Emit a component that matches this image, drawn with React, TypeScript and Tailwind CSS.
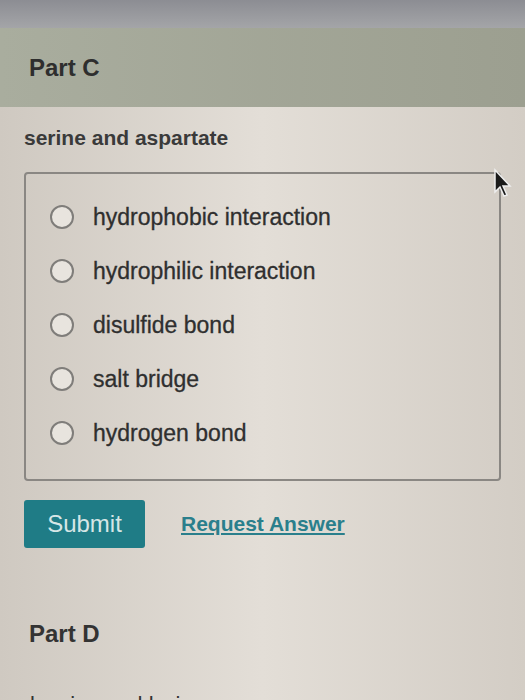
const options = [
  'hydrophobic interaction',
  'hydrophilic interaction',
  'disulfide bond',
  'salt bridge',
  'hydrogen bond',
]

export default function App() {
  return (
    <div className="relative w-[525px] h-[700px] overflow-hidden bg-gradient-to-r from-[#cfc9c1] via-[#e3ded7] to-[#d3cdc5] font-['Liberation_Sans',Arial,sans-serif] text-[#333]">
      <div className="h-[28px] bg-gradient-to-b from-[#8c8d93] to-[#a4a5a8]"></div>
      <div className="h-[79px] bg-gradient-to-r from-[#a9ad9e] to-[#9c9f90] flex items-center pl-[29px]">
        <span className="text-[24px] font-bold text-[#2e2e2e]">Part C</span>
      </div>
      <div className="px-[24px] pt-[19px]">
        <p className="text-[21px] font-bold text-[#3a3a3a] leading-[24px]">serine and aspartate</p>
        <div className="mt-[22px] w-[477px] h-[309px] border-2 border-[#8a8783] rounded-[4px] pt-[31px] pl-[24px]">
          <div className="flex flex-col gap-[30px]">
            {options.map((o) => (
              <label key={o} className="flex items-center gap-[19px] h-[24px]">
                <span className="w-[24px] h-[24px] rounded-full border-2 border-[#7f7d7a] bg-[#e8e4de]"></span>
                <span className="text-[23px] text-[#2f2f2f] [-webkit-text-stroke:0.3px_#2f2f2f]">{o}</span>
              </label>
            ))}
          </div>
        </div>
        <div className="mt-[19px] flex items-center gap-[36px]">
          <button className="w-[121px] h-[48px] rounded-[3px] bg-[#1f7c86] text-[#d6e6e6] text-[24px]">Submit</button>
          <a className="text-[21px] font-bold text-[#2a7f8c] underline underline-offset-2">Request Answer</a>
        </div>
        <p className="mt-[72px] pl-[5px] text-[24px] font-bold text-[#333] leading-[28px]">Part D</p>
        <p className="mt-[44px] pl-[6px] text-[22px] text-[#333] leading-[26px]">leucine and lysine</p>
      </div>
      <svg className="absolute left-[493px] top-[168px]" width="20" height="30" viewBox="0 0 20 30">
        <path d="M2 2 L2 24 L7 19 L11 28 L14 27 L10 18 L17 18 Z" fill="#1a1a1a" stroke="#eee" strokeWidth="1.5" />
      </svg>
    </div>
  )
}
